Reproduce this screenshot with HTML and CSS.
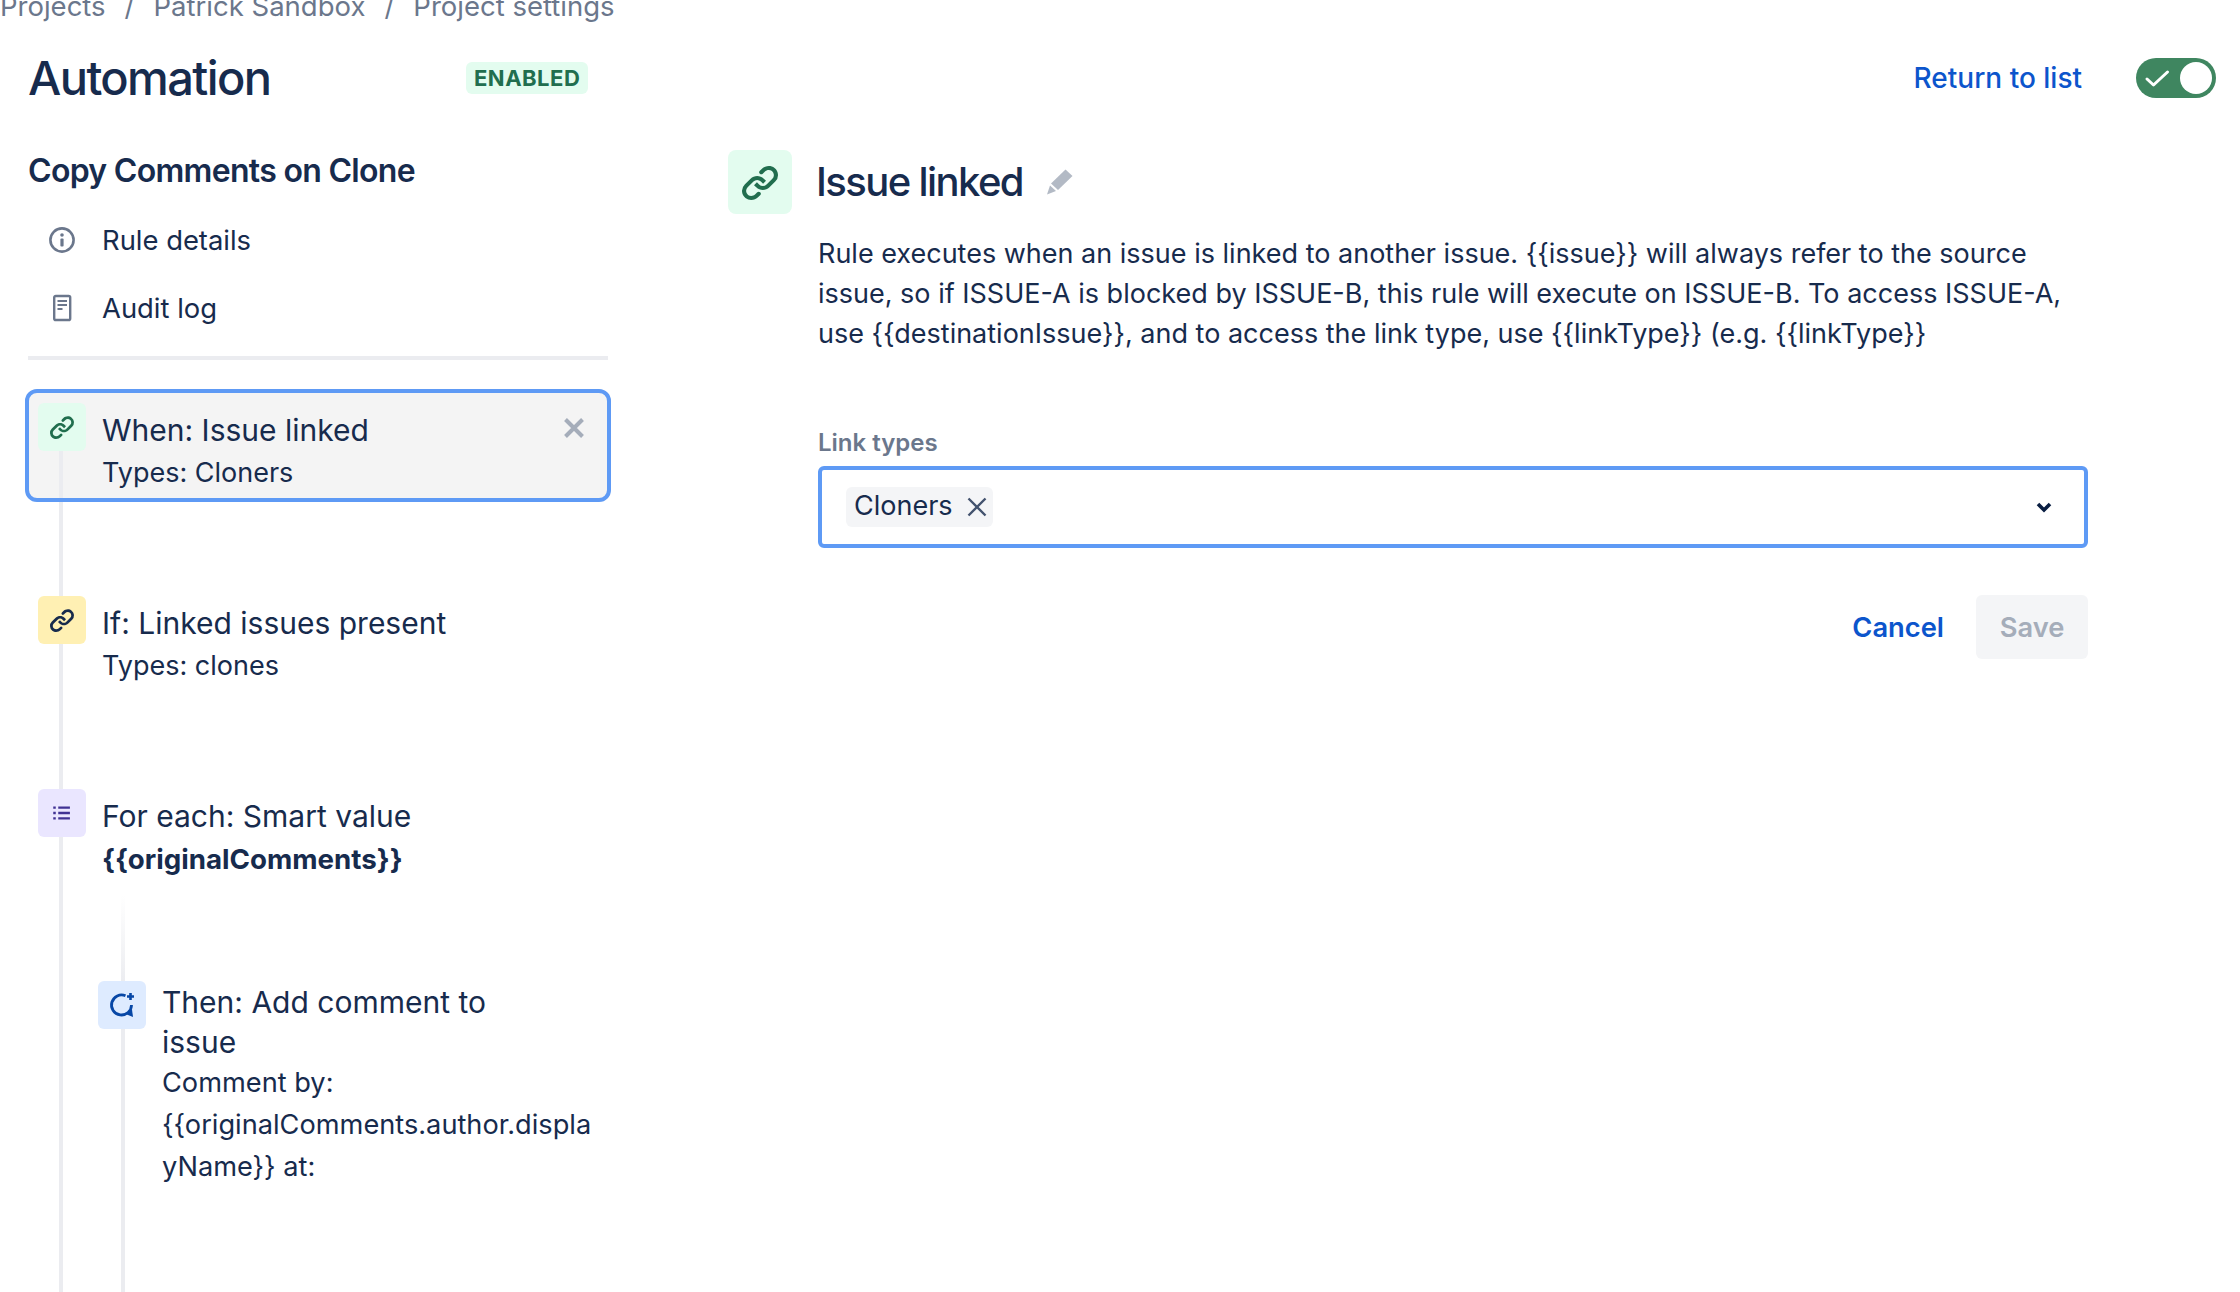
FILE: index.html
```html
<!DOCTYPE html>
<html lang="en">
<head>
<meta charset="utf-8">
<title>Automation</title>
<link rel="stylesheet" href="styles.css">
</head>
<body>
<svg class="defs" width="0" height="0">
  <symbol id="link" viewBox="0 0 24 24">
    <path fill="currentColor" d="M12.856 5.457l-.937.92a1.002 1.002 0 000 1.437 1.047 1.047 0 001.463 0l.984-.966c.967-.95 2.542-1.135 3.602-.288a2.54 2.54 0 01.203 3.81l-2.903 2.852a2.646 2.646 0 01-3.696 0l-1.11-1.09L9 13.57l1.108 1.089c1.822 1.788 4.802 1.788 6.622 0l2.905-2.852a4.558 4.558 0 00-.357-6.82c-1.893-1.517-4.695-1.226-6.422.47"/>
    <path fill="currentColor" d="M11.144 19.543l.937-.92a1.002 1.002 0 000-1.437 1.047 1.047 0 00-1.462 0l-.985.966c-.967.95-2.542 1.135-3.602.288a2.54 2.54 0 01-.203-3.81l2.903-2.852a2.646 2.646 0 013.696 0l1.11 1.09L15 11.43l-1.108-1.089c-1.822-1.788-4.802-1.788-6.622 0l-2.905 2.852a4.558 4.558 0 00.357 6.82c1.893 1.517 4.695 1.226 6.422-.47"/>
  </symbol>
</svg>
<div class="page">
  <nav class="crumbs"><span>Projects</span><i>/</i><span>Patrick Sandbox</span><i>/</i><span>Project settings</span></nav>
  <header class="top">
    <h1>Automation</h1>
    <span class="badge">ENABLED</span>
    <a class="link return">Return to list</a>
    <span class="toggle">
      <svg width="28" height="28" viewBox="0 0 28 28"><path d="M3 15l6.500 6L23.500 8" fill="none" stroke="#fff" stroke-width="3" stroke-linecap="round" stroke-linejoin="round"/></svg>
      <span class="knob"></span>
    </span>
  </header>
  <div class="columns">
    <aside class="side">
      <h2>Copy Comments on Clone</h2>
      <a class="nav first">
        <svg class="nav-ico" width="28" height="28" viewBox="0 0 28 28"><circle cx="14" cy="14" r="11.6" fill="none" stroke="#6b778c" stroke-width="2.6"/><rect x="12.4" y="12.4" width="3.2" height="8" rx="1" fill="#6b778c"/><circle cx="14" cy="9" r="1.8" fill="#6b778c"/></svg>
        Rule details
      </a>
      <a class="nav">
        <svg class="nav-ico" width="28" height="28" viewBox="0 0 28 28"><rect x="6.2" y="2" width="16" height="24" rx="1.6" fill="none" stroke="#6b778c" stroke-width="2.4"/><path d="M9.5 7h9.5M9.5 11h9.5M9.5 15h5" stroke="#6b778c" stroke-width="2"/></svg>
        Audit log
      </a>
      <hr class="rule">
      <div class="flow">
        <div class="step step-when selected">
          <span class="ico green"><svg width="32" height="32"><use href="#link"/></svg></span>
          <div class="body">
            <div class="title">When: Issue linked</div>
            <div class="sub">Types: Cloners</div>
          </div>
          <svg class="close" width="22" height="22" viewBox="0 0 22 22"><path d="M2.5 2.5l17 17M19.500 2.500l-17 17" stroke="#a5adba" stroke-width="4"/></svg>
        </div>
        <div class="step step-if">
          <span class="ico yellow"><svg width="32" height="32"><use href="#link"/></svg></span>
          <div class="body">
            <div class="title">If: Linked issues present</div>
            <div class="sub">Types: clones</div>
          </div>
        </div>
        <div class="step step-each">
          <span class="ico purple"><svg width="20" height="20" viewBox="0 0 24 24"><path d="M7.500 5.500h14M7.500 12h14M7.500 18.500h14" stroke="#403294" stroke-width="2.800"/><path d="M1.500 5.500h3M1.500 12h3M1.500 18.500h3" stroke="#403294" stroke-width="2.800"/></svg></span>
          <div class="body">
            <div class="title">For each: Smart value</div>
            <div class="sub strong">{{originalComments}}</div>
          </div>
        </div>
        <div class="nested">
          <div class="step step-then">
            <span class="ico blue"><svg width="32" height="32" viewBox="0 0 32 32"><path d="M25.500 16a10 10 0 1 1-6-9.200" fill="none" stroke="#0747a6" stroke-width="2.800"/><path d="M19.500 25l7.500 3-1-7.500z" fill="#0747a6"/><path d="M24.500 4v7M21 7.500h7" stroke="#0747a6" stroke-width="2.600"/></svg></span>
            <div class="body">
              <div class="title">Then: Add comment to issue</div>
              <div class="sub wrap">Comment by:<br>{{originalComments.author.displayName}} at:</div>
            </div>
          </div>
        </div>
      </div>
    </aside>
    <main class="main">
      <div class="main-head">
        <span class="ico-lg"><svg width="48" height="48"><use href="#link"/></svg></span>
        <h3>Issue linked</h3>
        <svg class="pencil" width="26" height="26" viewBox="0 0 26 26"><path d="M18.500 0.500l7 6.500L11 21l-7-6.500z" fill="#b3bac5"/><path d="M3 16.500l6 5.500-9 3.500z" fill="#b3bac5"/></svg>
      </div>
      <div class="content">
        <p class="desc">Rule executes when an issue is linked to another issue. {{issue}} will always refer to the source issue, so if ISSUE-A is blocked by ISSUE-B, this rule will execute on ISSUE-B. To access ISSUE-A, use {{destinationIssue}}, and to access the link type, use {{linkType}} (e.g. {{linkType}}</p>
        <label class="label">Link types</label>
        <div class="select">
          <span class="chip"><span class="chip-text">Cloners</span>
            <svg width="20" height="20" viewBox="0 0 20 20"><path d="M1.500 1.500l17 17M18.500 1.500l-17 17" stroke="#42526e" stroke-width="2.400"/></svg>
          </span>
          <svg class="chev" width="16" height="11" viewBox="0 0 16 11"><path d="M2 2l6 6 6-6" fill="none" stroke="#091e42" stroke-width="3.600"/></svg>
        </div>
        <div class="actions">
          <a class="link cancel">Cancel</a>
          <button class="save" type="button">Save</button>
        </div>
      </div>
    </main>
  </div>
</div>
</body>
</html>
```
FILE: styles.css
```css
* { box-sizing: border-box; }
html, body { margin: 0; height: 100%; background: #fff; }
body { font-family: Inter, "Liberation Sans", sans-serif; color: #172b4d; overflow: hidden; }
.defs { position: absolute; }
.page { height: 1292px; overflow: hidden; }

.crumbs { display: flex; gap: 19px; height: 32px; margin-top: -10px; font-size: 27.5px; line-height: 32px; color: #6b778c; }
.crumbs i { font-style: normal; }

.top { display: flex; align-items: center; height: 64px; margin-top: 24px; padding: 0 24px 0 28px; }
.top h1 { width: 438px; margin: 0; font-size: 47px; line-height: 56px; font-weight: 500; letter-spacing: -1.6px; }
.badge { padding: 0 8px; height: 32px; line-height: 32px; background: #e3fcef; color: #216e4e; font-size: 22px; font-weight: 700; border-radius: 6px; letter-spacing: .5px; }
.link { color: #0c55cc; font-weight: 500; }
.return { margin-left: auto; margin-right: 54px; font-size: 28px; }
.toggle { display: flex; align-items: center; justify-content: space-between; width: 80px; height: 40px; padding: 0 4px 0 8px; border-radius: 20px; background: #3f8660; }
.knob { width: 32px; height: 32px; border-radius: 50%; background: #fff; }

.columns { display: flex; }
.side { width: 728px; flex: none; padding-left: 28px; }
.side h2 { margin: 39px 0 0; font-size: 32px; line-height: 44px; font-weight: 600; letter-spacing: -0.7px; }
.nav { display: flex; align-items: center; gap: 26px; height: 44px; margin-top: 24px; padding-left: 20px; font-size: 27.4px; }
.nav.first { margin-top: 25px; }
.nav-ico { flex: none; }
.rule { width: 580px; height: 4px; margin: 26px 0 0; border: 0; background: #ebecf0; }

.flow { position: relative; width: 586px; margin-left: -3px; margin-top: 29px; }
.flow::before { content: ""; position: absolute; z-index: 1; left: 34px; top: 60px; width: 4px; height: 900px; background: #ebecf0; }
.step { position: relative; display: flex; gap: 16px; padding-left: 13px; }
.ico { position: relative; z-index: 2; flex: none; display: flex; align-items: center; justify-content: center; width: 48px; height: 48px; border-radius: 6px; }
.green { background: #e3fcef; color: #216e4e; }
.yellow { background: #fff0b3; color: #172b4d; }
.purple { background: #eae6ff; }
.blue { background: #deebff; }
.title { font-size: 30px; line-height: 40px; margin-bottom: 2px; }
.sub { font-size: 27px; line-height: 42px; }
.strong { font-size: 27.7px; font-weight: 700; }
.wrap { font-size: 27.2px; word-break: break-all; }

.selected { height: 113px; padding-top: 14px; background: #f4f4f4; border-radius: 12px; }
.selected::after { content: ""; position: absolute; z-index: 3; inset: 0; border: 4px solid #5e9af5; border-radius: 12px; pointer-events: none; }
.close { position: absolute; right: 26px; top: 28px; }
.body { padding-top: 7px; }
.step-if { margin-top: 94px; height: 193px; }
.step-each { height: 192px; }
.step-then { padding-left: 0; }
.step-then .body { width: 434px; padding-top: 1px; }
.step-then .title { width: 380px; margin-bottom: 0; }
.nested { position: relative; padding-left: 73px; }
.nested::before { content: ""; position: absolute; left: 96px; top: -86px; width: 4px; height: 500px; background: linear-gradient(#fff, #ebecf0 90px); }

.main { width: 1360px; }
.main-head { display: flex; align-items: center; margin-top: 40px; }
.ico-lg { display: flex; align-items: center; justify-content: center; width: 64px; height: 64px; border-radius: 8px; background: #e3fcef; color: #216e4e; }
.main-head h3 { margin: 0 0 0 24px; font-size: 40px; line-height: 48px; font-weight: 500; letter-spacing: -1.6px; }
.pencil { margin-left: 24px; }
.content { padding-left: 90px; }
.desc { width: 1270px; margin: 20px 0 0; font-size: 27px; line-height: 40px; }
.label { display: block; margin-top: 73px; font-size: 24px; line-height: 32px; font-weight: 600; color: #6b778c; }
.select { display: flex; align-items: center; justify-content: space-between; height: 82px; margin-top: 7px; padding: 0 32px 0 24px; border: 4px solid #5e9af5; border-radius: 6px; }
.chip { display: flex; align-items: center; gap: 14px; height: 40px; padding: 0 6px 0 8px; border-radius: 6px; background: #f4f5f7; font-size: 27px; }
.chip-text { margin-top: -3px; }
.actions { display: flex; align-items: center; justify-content: flex-end; gap: 32px; margin-top: 47px; }
.cancel { font-size: 27.3px; font-weight: 600; }
.save { width: 112px; height: 64px; border: 0; border-radius: 6px; background: #f4f5f7; color: #a5adba; font: 600 27.3px Inter, "Liberation Sans", sans-serif; }
```
